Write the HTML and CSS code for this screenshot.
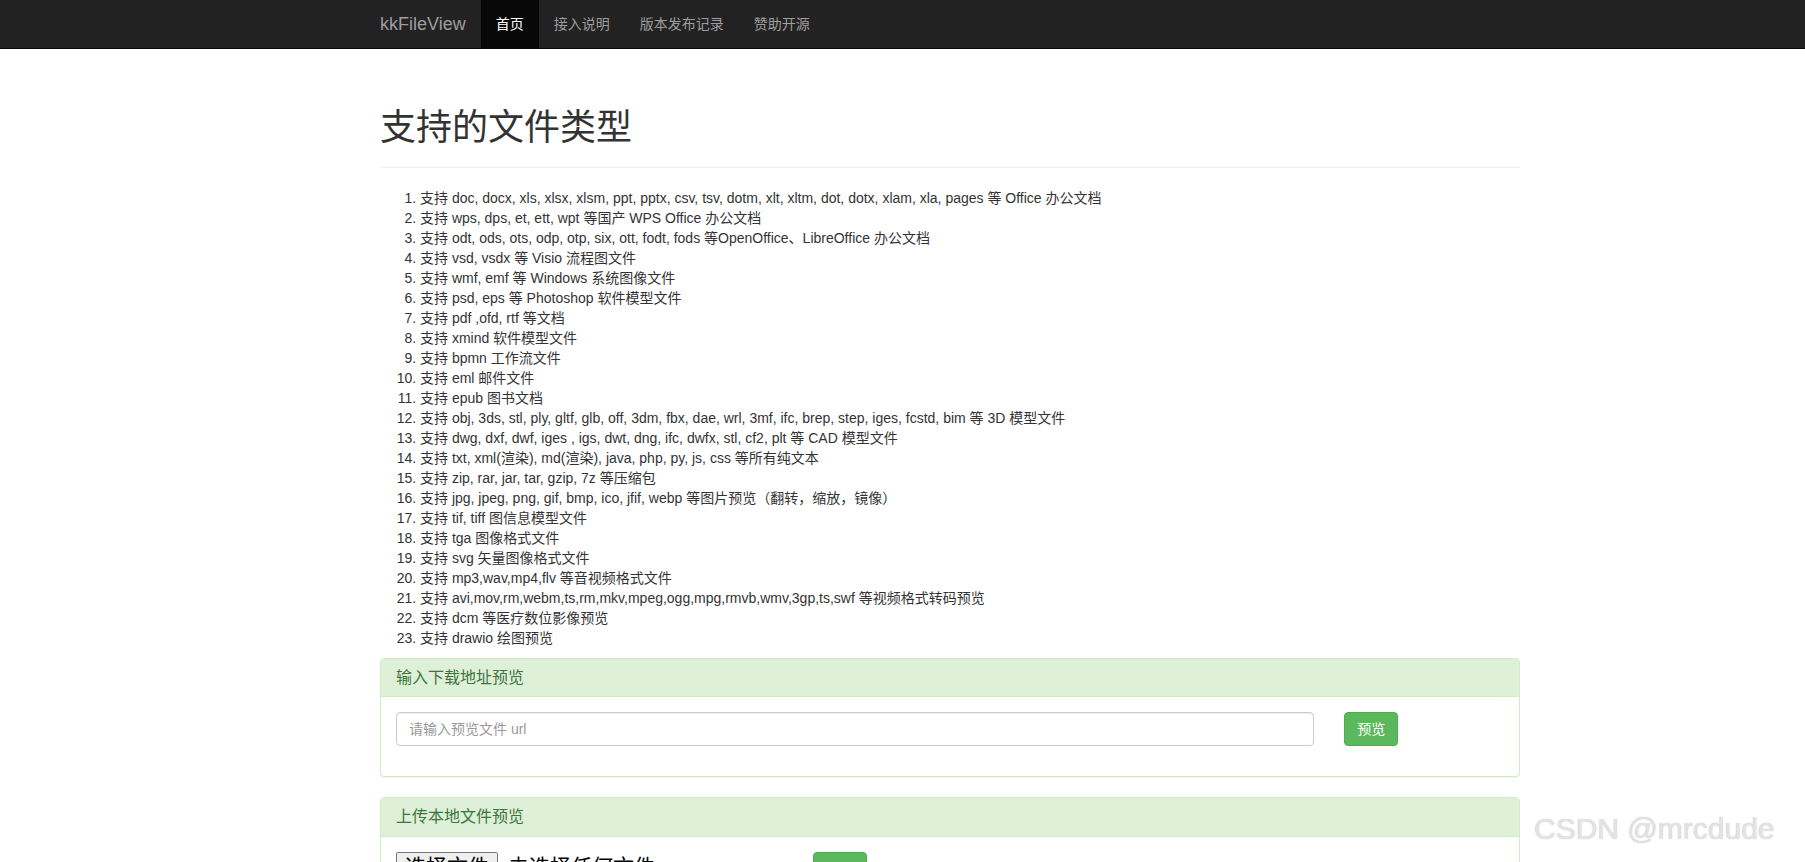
FILE: index.html
```html
<!DOCTYPE html>
<html lang="zh-CN">
<head>
<meta charset="utf-8">
<title>kkFileView</title>
<link rel="stylesheet" href="styles.css">
</head>
<body>
<nav class="navbar">
  <div class="nav-inner">
    <a class="brand" href="#">kkFileView</a>
    <ul class="nav">
      <li class="active"><a href="#">首页</a></li>
      <li><a href="#">接入说明</a></li>
      <li><a href="#">版本发布记录</a></li>
      <li><a href="#">赞助开源</a></li>
    </ul>
  </div>
</nav>

<div class="container">
  <div class="page-header">
    <h1>支持的文件类型</h1>
  </div>
  <ol class="types">
    <li>支持 doc, docx, xls, xlsx, xlsm, ppt, pptx, csv, tsv, dotm, xlt, xltm, dot, dotx, xlam, xla, pages 等 Office 办公文档</li>
    <li>支持 wps, dps, et, ett, wpt 等国产 WPS Office 办公文档</li>
    <li>支持 odt, ods, ots, odp, otp, six, ott, fodt, fods 等OpenOffice、LibreOffice 办公文档</li>
    <li>支持 vsd, vsdx 等 Visio 流程图文件</li>
    <li>支持 wmf, emf 等 Windows 系统图像文件</li>
    <li>支持 psd, eps 等 Photoshop 软件模型文件</li>
    <li>支持 pdf ,ofd, rtf 等文档</li>
    <li>支持 xmind 软件模型文件</li>
    <li>支持 bpmn 工作流文件</li>
    <li>支持 eml 邮件文件</li>
    <li>支持 epub 图书文档</li>
    <li>支持 obj, 3ds, stl, ply, gltf, glb, off, 3dm, fbx, dae, wrl, 3mf, ifc, brep, step, iges, fcstd, bim 等 3D 模型文件</li>
    <li>支持 dwg, dxf, dwf, iges , igs, dwt, dng, ifc, dwfx, stl, cf2, plt 等 CAD 模型文件</li>
    <li>支持 txt, xml(渲染), md(渲染), java, php, py, js, css 等所有纯文本</li>
    <li>支持 zip, rar, jar, tar, gzip, 7z 等压缩包</li>
    <li>支持 jpg, jpeg, png, gif, bmp, ico, jfif, webp 等图片预览（翻转，缩放，镜像）</li>
    <li>支持 tif, tiff 图信息模型文件</li>
    <li>支持 tga 图像格式文件</li>
    <li>支持 svg 矢量图像格式文件</li>
    <li>支持 mp3,wav,mp4,flv 等音视频格式文件</li>
    <li>支持 avi,mov,rm,webm,ts,rm,mkv,mpeg,ogg,mpg,rmvb,wmv,3gp,ts,swf 等视频格式转码预览</li>
    <li>支持 dcm 等医疗数位影像预览</li>
    <li>支持 drawio 绘图预览</li>
  </ol>

  <div class="panel">
    <div class="panel-heading"><h3 class="panel-title">输入下载地址预览</h3></div>
    <div class="panel-body">
      <div class="form-row">
        <div class="col-main">
          <input class="form-control" type="text" placeholder="请输入预览文件 url">
        </div>
        <div class="col-side">
          <button class="btn" type="button">预览</button>
        </div>
      </div>
    </div>
  </div>

  <div class="panel">
    <div class="panel-heading"><h3 class="panel-title">上传本地文件预览</h3></div>
    <div class="panel-body">
      <div class="upload-row">
        <div class="file-picker">
          <span class="file-btn">选择文件</span>
          <span class="file-name">未选择任何文件</span>
        </div>
        <button class="btn" type="button">上传</button>
      </div>
    </div>
  </div>
</div>

<div class="watermark">CSDN @mrcdude</div>
</body>
</html>
```

FILE: styles.css
```css
html, body {
  margin: 0;
  padding: 0;
  overflow: hidden;
}

body {
  font-family: "Liberation Sans", Arial, "Noto Sans CJK SC", sans-serif;
  font-size: 14px;
  line-height: 20px;
  color: #333;
  background: #fff;
  position: relative;
  height: 862px;
}

a {
  text-decoration: none;
}

/* ---------- navbar ---------- */
.navbar {
  background: #222;
  border-bottom: 1px solid #080808;
  height: 48px;
}

.nav-inner {
  width: 1170px;
  margin-left: 365px;
  display: flex;
  height: 48px;
}

.brand {
  display: block;
  padding: 0 15px;
  font-size: 18px;
  line-height: 48px;
  color: #9d9d9d;
}

.nav {
  list-style: none;
  margin: 0;
  padding: 0;
  display: flex;
}

.nav li a {
  display: block;
  padding: 0 15px;
  line-height: 48px;
  color: #9d9d9d;
}

.nav li.active a {
  background: #080808;
  color: #fff;
}

/* ---------- content ---------- */
.container {
  width: 1140px;
  margin-left: 380px;
}

.page-header {
  margin-top: 59px;
  padding-bottom: 9px;
  border-bottom: 1px solid #eee;
  margin-bottom: 20px;
}

.page-header h1 {
  margin: 0 0 10px;
  font-size: 36px;
  font-weight: 400;
  line-height: 1.1;
  color: #333;
}

.types {
  margin: 0 0 10px;
  padding-left: 40px;
}

.types li {
  line-height: 20px;
}

/* ---------- panels ---------- */
.panel {
  border: 1px solid #d6e9c6;
  border-radius: 4px;
  margin-bottom: 20px;
  background: #fff;
  box-shadow: 0 1px 1px rgba(0, 0, 0, 0.05);
}

.panel-heading {
  background: #dff0d8;
  color: #3c763d;
  padding: 10px 15px;
  border-bottom: 1px solid #d6e9c6;
  border-radius: 3px 3px 0 0;
}

.panel-title {
  margin: 0;
  font-size: 16px;
  font-weight: 400;
  line-height: 1.1;
}

.panel-body {
  padding: 15px;
}

.form-row {
  display: flex;
  margin: 0 -15px 15px;
}

.col-main {
  flex: 0 0 83.3333%;
  padding: 0 15px;
  box-sizing: border-box;
}

.col-side {
  flex: 0 0 16.6667%;
  padding: 0 15px;
  box-sizing: border-box;
}

.form-control {
  display: block;
  width: 100%;
  height: 34px;
  box-sizing: border-box;
  padding: 6px 12px;
  font-family: inherit;
  font-size: 14px;
  line-height: 20px;
  color: #555;
  background: #fff;
  border: 1px solid #ccc;
  border-radius: 4px;
  box-shadow: inset 0 1px 1px rgba(0, 0, 0, 0.075);
  outline: none;
}

.form-control::placeholder {
  color: #999;
}

.btn {
  display: inline-block;
  height: 34px;
  box-sizing: border-box;
  padding: 6px 12px;
  font-family: inherit;
  font-size: 14px;
  line-height: 20px;
  color: #fff;
  background: #5cb85c;
  border: 1px solid #4cae4c;
  border-radius: 4px;
  cursor: pointer;
}

.upload-row {
  display: flex;
  align-items: flex-start;
}

.file-picker {
  width: 417px;
  display: flex;
  align-items: center;
  font-size: 21px;
  line-height: 25px;
  color: #000;
}

.file-btn {
  display: inline-block;
  padding: 1px 8px;
  background: #efefef;
  border: 1px solid #767676;
  border-radius: 2px;
  margin-right: 10px;
}

/* ---------- watermark overlay ---------- */
.watermark {
  position: absolute;
  left: 1534px;
  top: 814px;
  font-family: "Liberation Sans", Arial, sans-serif;
  font-size: 30px;
  line-height: 30px;
  color: #e4e4e4;
  text-shadow: 0 0 1px rgba(0, 0, 0, 0.3);
  white-space: nowrap;
}
```
